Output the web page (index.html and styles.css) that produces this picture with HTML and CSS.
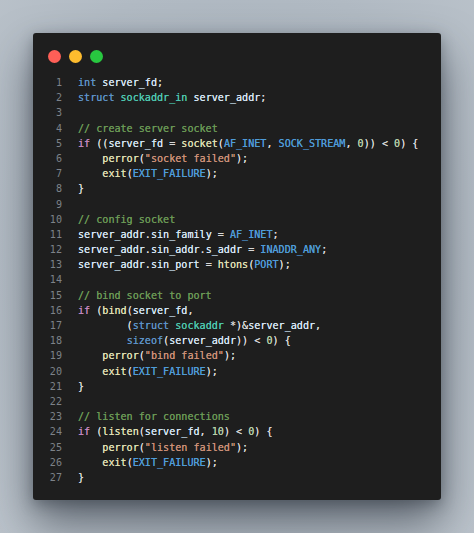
FILE: index.html
```html
<!DOCTYPE html>
<html>
<head>
<meta charset="utf-8">
<link rel="stylesheet" href="styles.css">
</head>
<body>
<div class="window">
  <div class="dots">
    <span class="dot red"></span>
    <span class="dot yellow"></span>
    <span class="dot green"></span>
  </div>
  <div class="code">
    <div class="line"><span class="ln">1</span><span class="src"><span class="k">int</span> <span class="v">server_fd</span>;</span></div>
    <div class="line"><span class="ln">2</span><span class="src"><span class="k">struct</span> <span class="t">sockaddr_in</span> <span class="v">server_addr</span>;</span></div>
    <div class="line"><span class="ln">3</span><span class="src"></span></div>
    <div class="line"><span class="ln">4</span><span class="src"><span class="c">// create server socket</span></span></div>
    <div class="line"><span class="ln">5</span><span class="src"><span class="i">if</span> ((<span class="v">server_fd</span> = <span class="f">socket</span>(<span class="m">AF_INET</span>, <span class="m">SOCK_STREAM</span>, <span class="n">0</span>)) &lt; <span class="n">0</span>) {</span></div>
    <div class="line"><span class="ln">6</span><span class="src">    <span class="f">perror</span>(<span class="s">"socket failed"</span>);</span></div>
    <div class="line"><span class="ln">7</span><span class="src">    <span class="f">exit</span>(<span class="m">EXIT_FAILURE</span>);</span></div>
    <div class="line"><span class="ln">8</span><span class="src">}</span></div>
    <div class="line"><span class="ln">9</span><span class="src"></span></div>
    <div class="line"><span class="ln">10</span><span class="src"><span class="c">// config socket</span></span></div>
    <div class="line"><span class="ln">11</span><span class="src"><span class="v">server_addr</span>.<span class="v">sin_family</span> = <span class="m">AF_INET</span>;</span></div>
    <div class="line"><span class="ln">12</span><span class="src"><span class="v">server_addr</span>.<span class="v">sin_addr</span>.<span class="v">s_addr</span> = <span class="m">INADDR_ANY</span>;</span></div>
    <div class="line"><span class="ln">13</span><span class="src"><span class="v">server_addr</span>.<span class="v">sin_port</span> = <span class="f">htons</span>(<span class="m">PORT</span>);</span></div>
    <div class="line"><span class="ln">14</span><span class="src"></span></div>
    <div class="line"><span class="ln">15</span><span class="src"><span class="c">// bind socket to port</span></span></div>
    <div class="line"><span class="ln">16</span><span class="src"><span class="i">if</span> (<span class="f">bind</span>(<span class="v">server_fd</span>,</span></div>
    <div class="line"><span class="ln">17</span><span class="src">        (<span class="k">struct</span> <span class="t">sockaddr</span> *)&amp;<span class="v">server_addr</span>,</span></div>
    <div class="line"><span class="ln">18</span><span class="src">        <span class="k">sizeof</span>(<span class="v">server_addr</span>)) &lt; <span class="n">0</span>) {</span></div>
    <div class="line"><span class="ln">19</span><span class="src">    <span class="f">perror</span>(<span class="s">"bind failed"</span>);</span></div>
    <div class="line"><span class="ln">20</span><span class="src">    <span class="f">exit</span>(<span class="m">EXIT_FAILURE</span>);</span></div>
    <div class="line"><span class="ln">21</span><span class="src">}</span></div>
    <div class="line"><span class="ln">22</span><span class="src"></span></div>
    <div class="line"><span class="ln">23</span><span class="src"><span class="c">// listen for connections</span></span></div>
    <div class="line"><span class="ln">24</span><span class="src"><span class="i">if</span> (<span class="f">listen</span>(<span class="v">server_fd</span>, <span class="n">10</span>) &lt; <span class="n">0</span>) {</span></div>
    <div class="line"><span class="ln">25</span><span class="src">    <span class="f">perror</span>(<span class="s">"listen failed"</span>);</span></div>
    <div class="line"><span class="ln">26</span><span class="src">    <span class="f">exit</span>(<span class="m">EXIT_FAILURE</span>);</span></div>
    <div class="line"><span class="ln">27</span><span class="src">}</span></div>
  </div>
</div>
</body>
</html>
```
FILE: styles.css
```css
html, body {
  margin: 0;
  padding: 0;
}
body {
  width: 474px;
  height: 533px;
  overflow: hidden;
  background: radial-gradient(ellipse at 50% 45%, #a6b0ba 0%, #b1bac3 65%, #bbc3cb 100%);
  padding-top: 33px;
  box-sizing: border-box;
}
.window {
  margin-left: 33px;
  width: 408px;
  height: 467px;
  box-sizing: border-box;
  background: #1e1e1e;
  border-radius: 3px;
  padding: 17px 15px 0 15px;
  box-shadow: 0 22px 44px rgba(35, 42, 52, 0.6), 0 4px 14px rgba(35, 42, 52, 0.35);
}
.dots {
  display: flex;
  gap: 8px;
  height: 13px;
}
.dot {
  width: 13px;
  height: 13px;
  border-radius: 50%;
}
.red { background: #fe5f57; }
.yellow { background: #febc2e; }
.green { background: #28c840; }
.code {
  margin-top: 12px;
  font-family: "DejaVu Sans Mono", monospace;
  font-size: 10.1px;
  line-height: 15.2px;
  color: #d8d8d8;
}
.line {
  display: flex;
  height: 15.2px;
}
.ln {
  width: 14px;
  flex: none;
  text-align: right;
  color: #7d8288;
  margin-right: 16px;
}
.src {
  white-space: pre;
  text-shadow: 0 0 0.4px currentColor;
}
.k { color: #5d93c8; }
.t { color: #4ec9b0; }
.v { color: #d6e6f5; }
.c { color: #6a9955; }
.i { color: #c586c0; }
.f { color: #e0e0b4; }
.m { color: #4f9bd8; }
.n { color: #b5cea8; }
.s { color: #ce9178; }
```
